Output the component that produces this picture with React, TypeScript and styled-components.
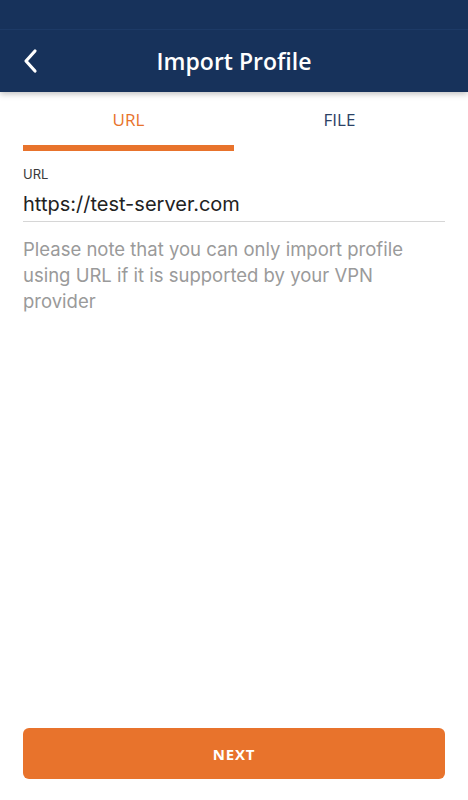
import styled, { createGlobalStyle } from "styled-components";

const Global = createGlobalStyle`
  html, body { margin: 0; padding: 0; background: #fff; }
  body { font-family: Inter, "Noto Sans", sans-serif; }
  * { box-sizing: border-box; }
`;

const App = () => {
  return (
    <>
      <Global />
      <Screen>
        <Header>
          <StatusBar />
          <NavBar>
            <BackButton aria-label="back">
              <svg width="16" height="26" viewBox="0 0 16 26" fill="none">
                <path d="M13 3L4 13l9 10" stroke="#fff" strokeWidth="3.2" strokeLinecap="round" strokeLinejoin="round" />
              </svg>
            </BackButton>
            <Title>Import Profile</Title>
          </NavBar>
        </Header>
        <Tabs>
          <Tab active>URL</Tab>
          <Tab>FILE</Tab>
        </Tabs>
        <Body>
          <Field>
            <Label>URL</Label>
            <Value>https://test-server.com</Value>
          </Field>
          <Note>
            Please note that you can only import profile using URL if it is supported by your VPN provider
          </Note>
        </Body>
        <Footer>
          <NextButton>NEXT</NextButton>
        </Footer>
      </Screen>
    </>
  );
};

const Screen = styled.div`
  width: 468px;
  height: 800px;
  display: flex;
  flex-direction: column;
  background: #fff;
`;
const Header = styled.div`
  background: #17325b;
  box-shadow: 0 2px 6px rgba(0, 0, 0, 0.25);
  position: relative;
  z-index: 1;
`;
const StatusBar = styled.div`
  height: 30px;
  border-bottom: 1px solid #1d3a66;
`;
const NavBar = styled.div`
  height: 62px;
  display: flex;
  align-items: center;
  justify-content: center;
  position: relative;
`;
const BackButton = styled.div`
  position: absolute;
  left: 22px;
  top: 18px;
  display: flex;
`;
const Title = styled.h1`
  margin: 0;
  color: #fff;
  font-family: "Open Sans", sans-serif;
  font-weight: 600;
  font-size: 23px;
`;
const Tabs = styled.div`
  display: grid;
  grid-template-columns: 1fr 1fr;
  padding: 0 23px;
`;
const Tab = styled.div<{ active?: boolean }>`
  height: 59px;
  padding-top: 16px;
  text-align: center;
  font-family: "Open Sans", sans-serif;
  font-size: 17px;
  color: ${(p) => (p.active ? "#e8732c" : "#2b4166")};
  border-bottom: 6px solid ${(p) => (p.active ? "#e8732c" : "transparent")};
`;
const Body = styled.div`
  flex: 1;
  padding: 15px 23px 0;
`;
const Field = styled.div`
  border-bottom: 1px solid #d6d6d6;
  padding-bottom: 4px;
`;
const Label = styled.div`
  font-size: 13px;
  color: #3a3a3a;
  line-height: 16px;
`;
const Value = styled.div`
  margin-top: 9px;
  font-size: 20px;
  color: #222;
  line-height: 26px;
`;
const Note = styled.p`
  margin: 14px 0 0;
  font-size: 18.5px;
  line-height: 26px;
  color: #9a9a9a;
`;
const Footer = styled.div`
  padding: 0 23px 21px;
`;
const NextButton = styled.button`
  width: 100%;
  height: 51px;
  border: none;
  border-radius: 6px;
  background: #e8732c;
  color: #fff;
  font-family: "Open Sans", sans-serif;
  font-weight: 700;
  font-size: 15px;
  letter-spacing: 0.8px;
`;

export default App;
